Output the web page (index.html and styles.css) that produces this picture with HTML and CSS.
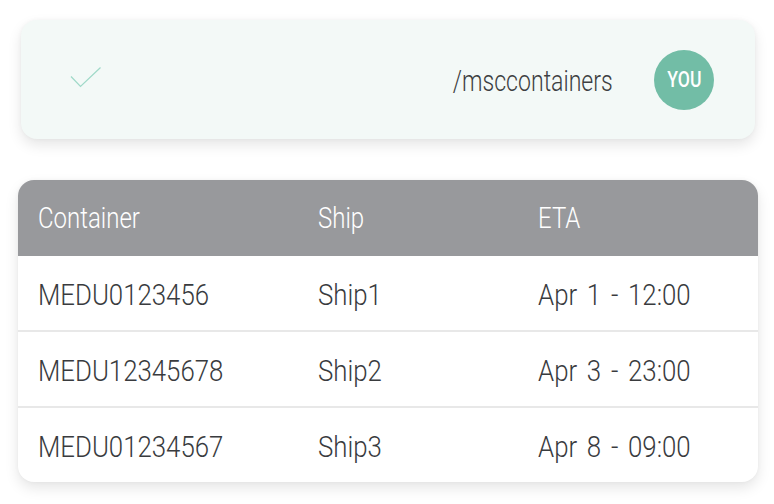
FILE: index.html
```html
<!DOCTYPE html>
<html>
<head>
<meta charset="utf-8">
<link rel="stylesheet" href="styles.css">
</head>
<body>
<div class="page">
  <div class="status-card">
    <svg class="check" width="32" height="22" viewBox="0 0 32 22">
      <polyline points="1,9.5 10.5,19.5 30.5,0.5" fill="none" stroke="#9fd9c8" stroke-width="1.2"/>
    </svg>
    <div class="spacer"></div>
    <span class="handle">/msccontainers</span>
    <span class="badge"><span class="badge-text">YOU</span></span>
  </div>
  <div class="table">
    <div class="row head">
      <span class="cell">Container</span><span class="cell">Ship</span><span class="cell">ETA</span>
    </div>
    <div class="row">
      <span class="cell">MEDU0123456</span><span class="cell">Ship1</span><span class="cell">Apr 1 - 12:00</span>
    </div>
    <div class="row">
      <span class="cell">MEDU12345678</span><span class="cell">Ship2</span><span class="cell">Apr 3 - 23:00</span>
    </div>
    <div class="row last">
      <span class="cell">MEDU01234567</span><span class="cell">Ship3</span><span class="cell">Apr 8 - 09:00</span>
    </div>
  </div>
</div>
</body>
</html>
```
FILE: styles.css
```css
* { box-sizing: border-box; }
html, body { margin: 0; background: #ffffff; }
body {
  font-family: Roboto, "Liberation Sans", sans-serif;
  font-weight: 300;
  width: 774px;
  height: 504px;
  overflow: hidden;
}
.page {
  padding-top: 20px;
  display: flex;
  flex-direction: column;
}
.status-card {
  margin-left: 21px;
  width: 734px;
  height: 119px;
  background: #f3f9f7;
  border-radius: 16px;
  box-shadow: 0 6px 14px rgba(0, 0, 0, 0.10), 0 0 4px rgba(0,0,0,0.04);
  display: flex;
  align-items: center;
  padding: 0 41px 0 49px;
}
.check { display: block; margin-top: -3px; }
.spacer { flex: 1; }
.handle {
  display: inline-block;
  font-size: 30px;
  line-height: 1;
  color: #3d3f42;
  transform: scaleX(0.77);
  transform-origin: right center;
  margin-right: 41px;
  margin-top: 2px;
}
.badge {
  width: 60px;
  height: 60px;
  border-radius: 50%;
  background: #72bda6;
  display: flex;
  align-items: center;
  justify-content: center;
}
.badge-text {
  display: inline-block;
  color: #ffffff;
  font-weight: 500;
  font-size: 22px;
  line-height: 1;
  transform: scaleX(0.8);
}
.table {
  margin-top: 41px;
  margin-left: 18px;
  width: 740px;
  border-radius: 16px;
  overflow: hidden;
  background: #ffffff;
  box-shadow: 0 6px 14px rgba(0, 0, 0, 0.10), 0 0 4px rgba(0,0,0,0.04);
}
.row {
  display: grid;
  grid-template-columns: 280px 220px 1fr;
  align-items: center;
  padding: 4px 0 0 20px;
  height: 76px;
  border-bottom: 2px solid #e8e8e8;
  font-size: 30px;
  color: #393b3e;
}
.cell {
  display: inline-block;
  justify-self: start;
  line-height: 1;
  word-spacing: 4px;
  transform: scaleX(0.86);
  transform-origin: left center;
}
.row.head {
  padding-top: 0;
  background: #98999c;
  color: #ffffff;
  border-bottom: none;
}
.row.head .cell { transform: scaleX(0.8); }
.row.last { border-bottom: none; height: 74px; }
```
